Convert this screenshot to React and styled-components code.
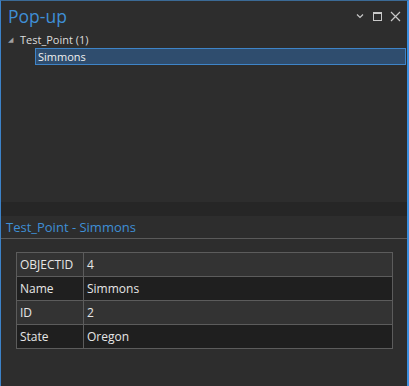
import React from 'react'
import styled, { createGlobalStyle } from 'styled-components'

const GlobalStyle = createGlobalStyle`
    html, body {
        margin: 0;
        padding: 0;
        background: #2d2d2d;
    }
    body {
        font-family: "Open Sans", "Noto Sans", sans-serif;
    }
`

const attributes = [
    { field: 'OBJECTID', value: '4' },
    { field: 'Name', value: 'Simmons' },
    { field: 'ID', value: '2' },
    { field: 'State', value: 'Oregon' },
]

const App = () => (
    <>
        <GlobalStyle />
        <Pane>
            <TitleBar>
                <Title>Pop-up</Title>
                <Controls>
                    <svg width="10" height="10" viewBox="0 0 10 10">
                        <path d="M2 3.5 L5 6.5 L8 3.5" stroke="#c8c8c8" strokeWidth="1.2" fill="none" />
                    </svg>
                    <svg width="11" height="11" viewBox="0 0 11 11">
                        <rect x="1.5" y="1.5" width="8" height="8" stroke="#c8c8c8" strokeWidth="1" fill="none" />
                        <rect x="1.5" y="1.5" width="8" height="1.5" fill="#c8c8c8" />
                    </svg>
                    <svg width="11" height="11" viewBox="0 0 11 11">
                        <path d="M1 1 L10 10 M10 1 L1 10" stroke="#c8c8c8" strokeWidth="1.2" />
                    </svg>
                </Controls>
            </TitleBar>
            <Tree>
                <TreeRow>
                    <Expander>◢</Expander>
                    <span>Test_Point (1)</span>
                </TreeRow>
                <Selected>Simmons</Selected>
            </Tree>
            <Splitter />
            <DetailHeader>Test_Point - Simmons</DetailHeader>
            <Details>
                <Table>
                    <tbody>
                        {attributes.map((row, i) => (
                            <Row key={row.field} $odd={i % 2 === 1}>
                                <FieldCell>{row.field}</FieldCell>
                                <ValueCell>{row.value}</ValueCell>
                            </Row>
                        ))}
                    </tbody>
                </Table>
            </Details>
        </Pane>
    </>
)

const Pane = styled.div`
    width: 409px;
    height: 386px;
    box-sizing: border-box;
    border-top: 1px solid #3b6a96;
    border-left: 1px solid #3c82c8;
    border-right: 2px solid #3c8fe0;
    background: #2d2d2d;
    display: flex;
    flex-direction: column;
`

const TitleBar = styled.div`
    display: flex;
    align-items: center;
    justify-content: space-between;
    height: 30px;
    padding: 0 6px 0 7px;
`

const Title = styled.div`
    color: #3f8fd6;
    font-size: 17.5px;
`

const Controls = styled.div`
    display: flex;
    align-items: center;
    gap: 7px;

    svg {
        display: block;
    }
`

const Tree = styled.div`
    flex: 1;
    color: #dcdcdc;
    font-size: 11px;
`

const TreeRow = styled.div`
    display: flex;
    align-items: center;
    height: 17px;
    padding-left: 7px;
    gap: 7px;
`

const Expander = styled.span`
    font-size: 7px;
    color: #a0a0a0;
`

const Selected = styled.div`
    margin: 0 1px 0 34px;
    height: 15px;
    line-height: 15px;
    padding-left: 2px;
    background: #2f4d6e;
    border: 1px solid #3e84c8;
    color: #f0f0f0;
`

const Splitter = styled.div`
    height: 14px;
    background: #262626;
`

const DetailHeader = styled.div`
    color: #3f8fd6;
    font-size: 13px;
    height: 22px;
    line-height: 22px;
    padding-left: 5px;
    border-bottom: 1px solid #5a5a5a;
`

const Details = styled.div`
    box-sizing: border-box;
    height: 147px;
    padding: 13px 14px 0 15px;
`

const Table = styled.table`
    width: 100%;
    border-collapse: collapse;
    font-size: 12px;
    color: #e6e6e6;
`

const Row = styled.tr`
    height: 24px;
    background: ${(props) => (props.$odd ? '#1f1f1f' : '#333333')};
`

const FieldCell = styled.td`
    width: 60px;
    padding: 0 3px;
    border: 1px solid #5c5c5c;
`

const ValueCell = styled.td`
    padding: 0 3px;
    border: 1px solid #5c5c5c;
`

export default App
